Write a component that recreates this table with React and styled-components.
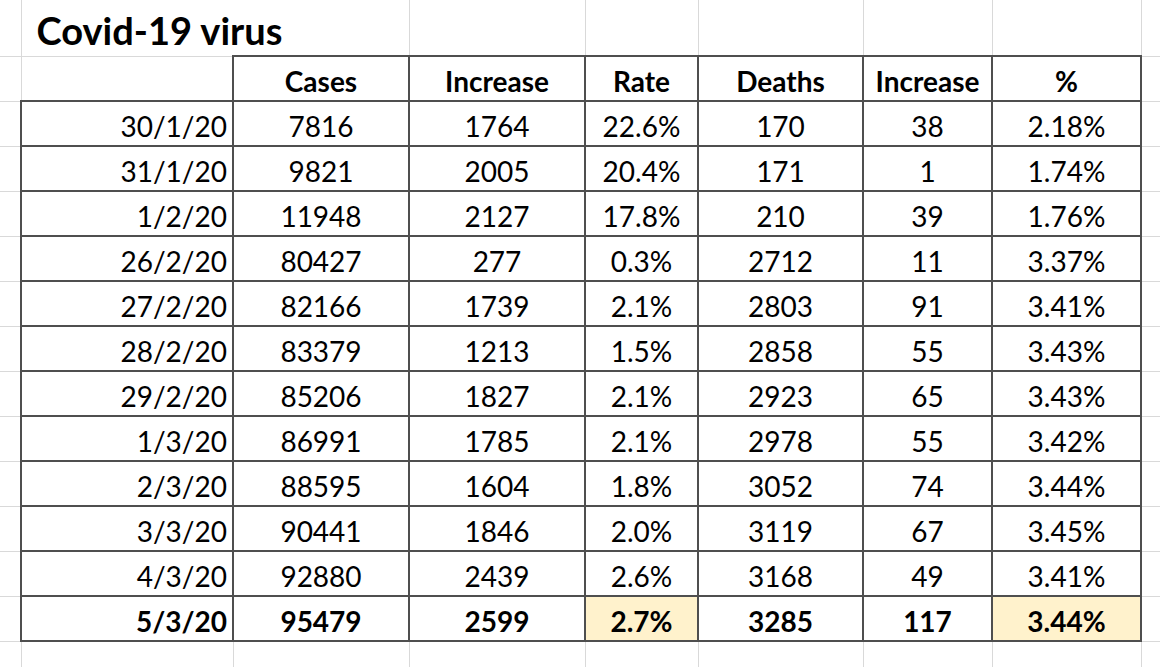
import React from "react";
import styled, { createGlobalStyle } from "styled-components";

const GlobalStyle = createGlobalStyle`
  html, body {
    margin: 0;
    padding: 0;
    background: #ffffff;
    overflow: hidden;
  }
  body {
    font-family: Lato, "Open Sans", "Liberation Sans", sans-serif;
    color: #000000;
  }
`;

const GRID = "1px solid #d9d9d9";
const EDGE = "2px solid #4f4f4f";

const COLUMNS = [21, 212, 176, 176, 113, 165, 129, 149, 19];

const ROWS = [
  ["30/1/20", "7816", "1764", "22.6%", "170", "38", "2.18%"],
  ["31/1/20", "9821", "2005", "20.4%", "171", "1", "1.74%"],
  ["1/2/20", "11948", "2127", "17.8%", "210", "39", "1.76%"],
  ["26/2/20", "80427", "277", "0.3%", "2712", "11", "3.37%"],
  ["27/2/20", "82166", "1739", "2.1%", "2803", "91", "3.41%"],
  ["28/2/20", "83379", "1213", "1.5%", "2858", "55", "3.43%"],
  ["29/2/20", "85206", "1827", "2.1%", "2923", "65", "3.43%"],
  ["1/3/20", "86991", "1785", "2.1%", "2978", "55", "3.42%"],
  ["2/3/20", "88595", "1604", "1.8%", "3052", "74", "3.44%"],
  ["3/3/20", "90441", "1846", "2.0%", "3119", "67", "3.45%"],
  ["4/3/20", "92880", "2439", "2.6%", "3168", "49", "3.41%"],
  ["5/3/20", "95479", "2599", "2.7%", "3285", "117", "3.44%"],
];

const HEADINGS = ["Cases", "Increase", "Rate", "Deaths", "Increase", "%"];

// columns whose last-row value gets the yellow fill
const HIGHLIGHT = [3, 6];

function App() {
  return (
    <>
      <GlobalStyle />
      <Sheet>
        <colgroup>
          {COLUMNS.map((w, i) => (
            <col key={i} style={{ width: w }} />
          ))}
        </colgroup>
        <tbody>
          <TitleRow>
            <GutterCell />
            <TitleCell colSpan={2}>Covid-19 virus</TitleCell>
            {HEADINGS.slice(1).map((_, i) => (
              <BlankCell key={i} />
            ))}
            <BlankCell />
          </TitleRow>

          <Row>
            <GutterCell />
            <BlankCell />
            {HEADINGS.map((h, i) => (
              <HeadCell key={i}>{h}</HeadCell>
            ))}
            <BlankCell />
          </Row>

          {ROWS.map((row, r) => {
            const last = r === ROWS.length - 1;
            return (
              <Row key={row[0]}>
                <GutterCell />
                <DateCell $bold={last}>{row[0]}</DateCell>
                {row.slice(1).map((value, c) => (
                  <NumCell
                    key={c}
                    $bold={last}
                    $highlight={last && HIGHLIGHT.includes(c + 1)}
                  >
                    {value}
                  </NumCell>
                ))}
                <BlankCell />
              </Row>
            );
          })}

          <Row>
            <GutterCell />
            {COLUMNS.slice(1).map((_, i) => (
              <BlankCell key={i} />
            ))}
          </Row>
        </tbody>
      </Sheet>
    </>
  );
}

const Sheet = styled.table`
  table-layout: fixed;
  width: 1160px;
  border-collapse: collapse;
  border-spacing: 0;
`;

const TitleRow = styled.tr`
  height: 56px;

  & > td {
    border-top: none;
  }
`;

const Row = styled.tr`
  height: 45px;
`;

const Cell = styled.td`
  border: ${GRID};
  padding: 0 0 5px;
  vertical-align: bottom;
  line-height: 1;
  white-space: nowrap;
  font-size: 28px;
`;

const GutterCell = styled(Cell)`
  border-left: none;
`;

const BlankCell = styled(Cell)``;

const TitleCell = styled(Cell)`
  padding: 0 0 6px 15px;
  font-size: 38px;
  font-weight: 700;
  text-align: left;
  overflow: visible;
`;

const HeadCell = styled(Cell)`
  border: ${EDGE};
  font-weight: 700;
  text-align: center;
`;

const DateCell = styled(Cell)`
  border: ${EDGE};
  padding-right: 5px;
  text-align: right;
  font-weight: ${(p) => (p.$bold ? 700 : 400)};
`;

const NumCell = styled(Cell)`
  border: ${EDGE};
  text-align: center;
  font-weight: ${(p) => (p.$bold ? 700 : 400)};
  background: ${(p) => (p.$highlight ? "#fff2cc" : "transparent")};
`;

export default App;
